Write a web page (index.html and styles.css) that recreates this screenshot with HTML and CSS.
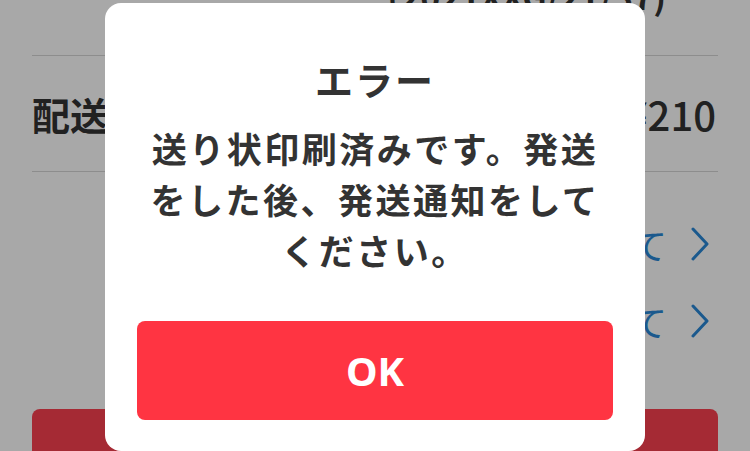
FILE: index.html
```html
<!DOCTYPE html>
<html lang="ja">
<head>
    <meta charset="UTF-8">
    <meta name="viewport" content="width=device-width, initial-scale=1.0">
    <title>発送管理</title>
    <link rel="stylesheet" href="styles.css">
</head>
<body>
    <main class="page">
        <p class="order-no">(2021XXG/21/37)</p>
        <div class="fee-row">
            <span class="fee-label">配送料</span>
            <span class="fee-value">¥210</span>
        </div>
        <ul class="links">
            <li>
                <span>発送方法について</span>
                <svg class="chevron" viewBox="0 0 18 34" width="18" height="34"><path d="M2 2 L16 17 L2 32" fill="none" stroke="currentColor" stroke-width="3" stroke-linecap="round" stroke-linejoin="round"/></svg>
            </li>
            <li>
                <span>送り状について</span>
                <svg class="chevron" viewBox="0 0 18 34" width="18" height="34"><path d="M2 2 L16 17 L2 32" fill="none" stroke="currentColor" stroke-width="3" stroke-linecap="round" stroke-linejoin="round"/></svg>
            </li>
        </ul>
        <button class="ship-btn">発送通知をする</button>
    </main>

    <div class="overlay">
        <div class="dialog">
            <h2 class="dialog-title">エラー</h2>
            <p class="dialog-msg">送り状印刷済みです。発送<br>をした後、発送通知をして<br>ください。</p>
            <button class="dialog-ok">OK</button>
        </div>
    </div>
</body>
</html>
```

FILE: styles.css
```css
body {
    margin: 0;
    padding: 0;
    background-color: #fff;
    color: #333;
    font-family: "Noto Sans CJK JP", "Noto Sans", sans-serif;
    overflow: hidden;
}
.page {
    padding: 0 32px;
}
.order-no {
    margin: -21px 0 0;
    padding: 0 52px 42px 0;
    line-height: 34px;
    font-size: 34px;
    font-weight: bold;
    text-align: right;
    border-bottom: 1px solid #d6d6d6;
}
.fee-row {
    height: 115px;
    display: flex;
    justify-content: space-between;
    align-items: center;
    border-bottom: 1px solid #d6d6d6;
}
.fee-label {
    font-size: 38px;
    font-weight: bold;
}
.fee-value {
    font-size: 40px;
    font-weight: 500;
    margin-right: 2px;
}
.links {
    list-style-type: none;
    margin: 33px 0 0;
    padding: 0;
}
.links li {
    height: 77px;
    display: flex;
    justify-content: flex-end;
    align-items: center;
    gap: 24px;
    padding-right: 9px;
    color: #2988d7;
    font-size: 36px;
}
.chevron {
    display: block;
}
.ship-btn {
    display: block;
    width: 100%;
    height: 130px;
    margin-top: 50px;
    border: none;
    border-radius: 8px;
    background-color: #fa4050;
    color: #fff;
    font-family: inherit;
    font-size: 34px;
    font-weight: bold;
}
.overlay {
    position: fixed;
    top: 0;
    left: 0;
    right: 0;
    bottom: 0;
    background-color: rgba(0, 0, 0, 0.34);
    display: flex;
    justify-content: center;
    align-items: flex-start;
    padding-top: 3px;
}
.dialog {
    width: 540px;
    box-sizing: border-box;
    padding: 52px 32px 31px;
    background-color: #fff;
    border-radius: 16px;
    text-align: center;
}
.dialog-title {
    margin: 0 0 19px;
    font-size: 38px;
    line-height: 48px;
    letter-spacing: 2px;
    font-weight: bold;
    color: #333;
}
.dialog-msg {
    margin: 0 0 46px;
    font-size: 35px;
    line-height: 51px;
    letter-spacing: 2.5px;
    font-weight: bold;
    color: #333;
}
.dialog-ok {
    display: block;
    width: 100%;
    height: 99px;
    border: none;
    border-radius: 8px;
    background-color: #ff3442;
    color: #fff;
    font-family: "Noto Sans", sans-serif;
    font-size: 40px;
    font-weight: bold;
}
```
